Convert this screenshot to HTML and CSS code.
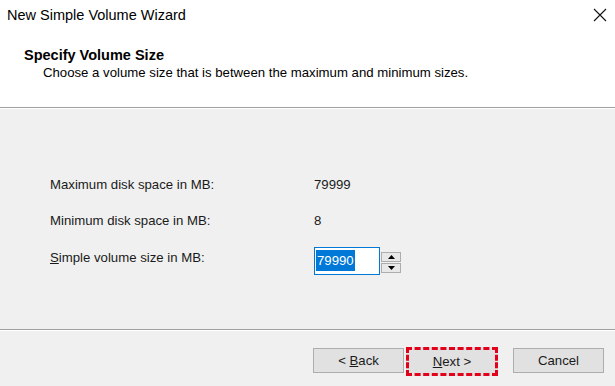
FILE: index.html
```html
<!DOCTYPE html>
<html>
<head>
<meta charset="utf-8">
<title>New Simple Volume Wizard</title>
<link rel="stylesheet" href="styles.css">
</head>
<body>
<div class="window">
  <div class="top">
    <div class="titlebar">
      <span class="title">New Simple Volume Wizard</span>
      <svg class="close" width="14" height="14" viewBox="0 0 14 14"><path d="M1 1 L13 13 M13 1 L1 13" stroke="#111" stroke-width="1.1" fill="none"/></svg>
    </div>
    <div class="header">
      <div class="heading">Specify Volume Size</div>
      <div class="subtitle">Choose a volume size that is between the maximum and minimum sizes.</div>
    </div>
  </div>
  <div class="main">
    <div class="row">
      <span class="label">Maximum disk space in MB:</span>
      <span class="value">79999</span>
    </div>
    <div class="row">
      <span class="label">Minimum disk space in MB:</span>
      <span class="value">8</span>
    </div>
    <div class="row row-input">
      <span class="label label-input"><u>S</u>imple volume size in MB:</span>
      <div class="field">
        <div class="textbox"><span class="sel">79990</span></div>
        <div class="spinner">
          <div class="spin"><svg width="7" height="4" viewBox="0 0 7 4"><path d="M0 4 L3.5 0 L7 4 Z" fill="#000"/></svg></div>
          <div class="spin"><svg width="7" height="4" viewBox="0 0 7 4"><path d="M0 0 L3.5 4 L7 0 Z" fill="#000"/></svg></div>
        </div>
      </div>
    </div>
  </div>
  <div class="footer">
    <button class="btn">&lt; <u>B</u>ack</button>
    <button class="btn btn-next"><u>N</u>ext &gt;</button>
    <button class="btn btn-cancel">Cancel</button>
  </div>
</div>
</body>
</html>
```

FILE: styles.css
```css
html, body {
  margin: 0;
  padding: 0;
}
body {
  width: 615px;
  height: 386px;
  overflow: hidden;
  background: #f0f0f0;
  font-family: "Liberation Sans", Arial, sans-serif;
  color: #000;
}
.window {
  display: flex;
  flex-direction: column;
  width: 615px;
  height: 386px;
}
.top {
  background: #fff;
  height: 107px;
  border-bottom: 1px solid #a0a0a0;
  display: flex;
  flex-direction: column;
}
.titlebar {
  height: 30px;
  display: flex;
  align-items: center;
  justify-content: space-between;
  padding: 0 8px 0 7px;
}
.title {
  font-size: 14.5px;
  color: #000;
}
.close {
  display: block;
  margin-top: 0;
}
.header {
  padding: 17px 0 0 24px;
}
.heading {
  font-size: 14.5px;
  font-weight: bold;
  line-height: 16px;
}
.subtitle {
  font-size: 13.2px;
  line-height: 16px;
  margin-top: 2px;
  padding-left: 19px;
}
.main {
  border-top: 1px solid #fff;
  height: 221px;
  box-sizing: border-box;
  padding: 68px 0 0 50px;
  display: flex;
  flex-direction: column;
  gap: 20px;
  font-size: 13.2px;
}
.row {
  display: flex;
  align-items: center;
  height: 16px;
  line-height: 16px;
}
.row-input {
  align-items: flex-start;
  height: 28px;
  margin-top: -2px;
}
.label {
  width: 264px;
  color: #1a1a1a;
}
.label-input {
  margin-top: 3px;
}
.value {
  color: #1a1a1a;
}
.field {
  display: flex;
  align-items: flex-start;
}
.textbox {
  width: 66px;
  height: 28px;
  box-sizing: border-box;
  border: 1px solid #0078d7;
  background: #fff;
  padding: 2px 0 0 1px;
}
.sel {
  display: inline-block;
  background: #0078d7;
  color: #fff;
  line-height: 21px;
  padding: 0 1px;
  font-size: 13.2px;
}
.spinner {
  display: flex;
  flex-direction: column;
  gap: 1px;
  margin-top: 5px;
  margin-left: 1px;
  padding: 0;
}
.spin {
  width: 20px;
  height: 10px;
  box-sizing: border-box;
  border: 1px solid #adadad;
  background: #e8e8e8;
  display: flex;
  align-items: center;
  justify-content: center;
}
.spin svg {
  display: block;
}
.footer {
  border-top: 1px solid #a0a0a0;
  box-shadow: inset 0 1px 0 #fff;
  flex: 1;
  display: flex;
  justify-content: flex-end;
  align-items: flex-start;
  padding: 18px 11px 0 0;
}
.btn {
  width: 91px;
  height: 25px;
  box-sizing: border-box;
  border: 1px solid #adadad;
  background: #e1e1e1;
  font-family: "Liberation Sans", Arial, sans-serif;
  font-size: 13.2px;
  color: #1a1a1a;
  padding: 0;
  margin: 0;
}
.btn-next {
  width: 92px;
  height: 29px;
  margin: -1px 0 0 2px;
  border: 3px dashed #e3001b;
}
.btn-cancel {
  margin-left: 15px;
}
```
